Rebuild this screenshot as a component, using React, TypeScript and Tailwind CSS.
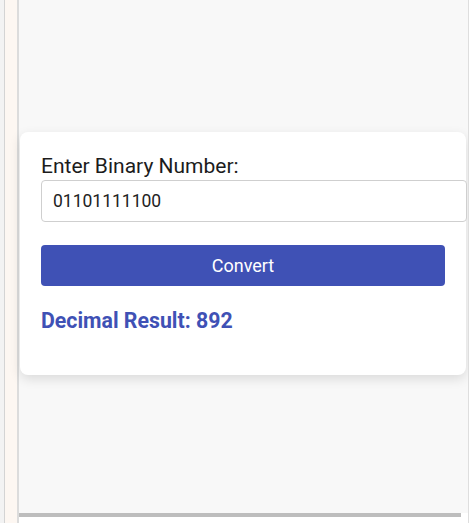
import { useState } from "react";

export default function App() {
  const [binary, setBinary] = useState("01101111100");
  const [result, setResult] = useState<number | null>(892);

  const convert = () => {
    if (/^[01]+$/.test(binary)) setResult(parseInt(binary, 2));
  };

  return (
    <div className="flex h-[523px] w-[474px] bg-white font-['Roboto',sans-serif]">
      {/* left edge strips */}
      <div className="w-[4px] bg-[#f3f3f3]" />
      <div className="w-[1px] bg-[#d4d4d4]" />
      <div className="w-[12px] bg-[#fdf7f2]" />
      <div className="w-[2px] bg-[#dcdcdc]" />

      {/* main pane */}
      <div className="flex w-[449px] flex-col">
        <div className="flex-1 bg-[#f8f8f8] pt-[132px]">
          <div className="ml-[1px] w-[446px] rounded-lg bg-white px-[21px] pt-[20px] pb-[40px] shadow-[0_4px_12px_rgba(0,0,0,0.12)]">
            <label className="block text-[21px] leading-[28px] text-[#1c1c1c]">
              Enter Binary Number:
            </label>
            <input
              type="text"
              value={binary}
              onChange={(e) => setBinary(e.target.value)}
              className="block h-[42px] w-[426px] rounded border border-[#cfcfcf] bg-white px-[11px] text-[17.5px] text-[#222] outline-none"
            />
            <button
              onClick={convert}
              className="mt-[23px] flex h-[41px] w-full items-center justify-center rounded bg-[#3f51b5] text-[18px] text-white"
            >
              Convert
            </button>
            <p className="mt-[21px] text-[21.3px] font-bold leading-[28px] text-[#3f51b5]">
              Decimal Result: {result}
            </p>
          </div>
        </div>
        <div className="h-[4px] w-[442px] bg-[#bdbdbd]" />
        <div className="h-[6px] bg-white" />
      </div>

      {/* right edge */}
      <div className="w-[1px] bg-[#dedede]" />
      <div className="flex-1 bg-white" />
    </div>
  );
}
